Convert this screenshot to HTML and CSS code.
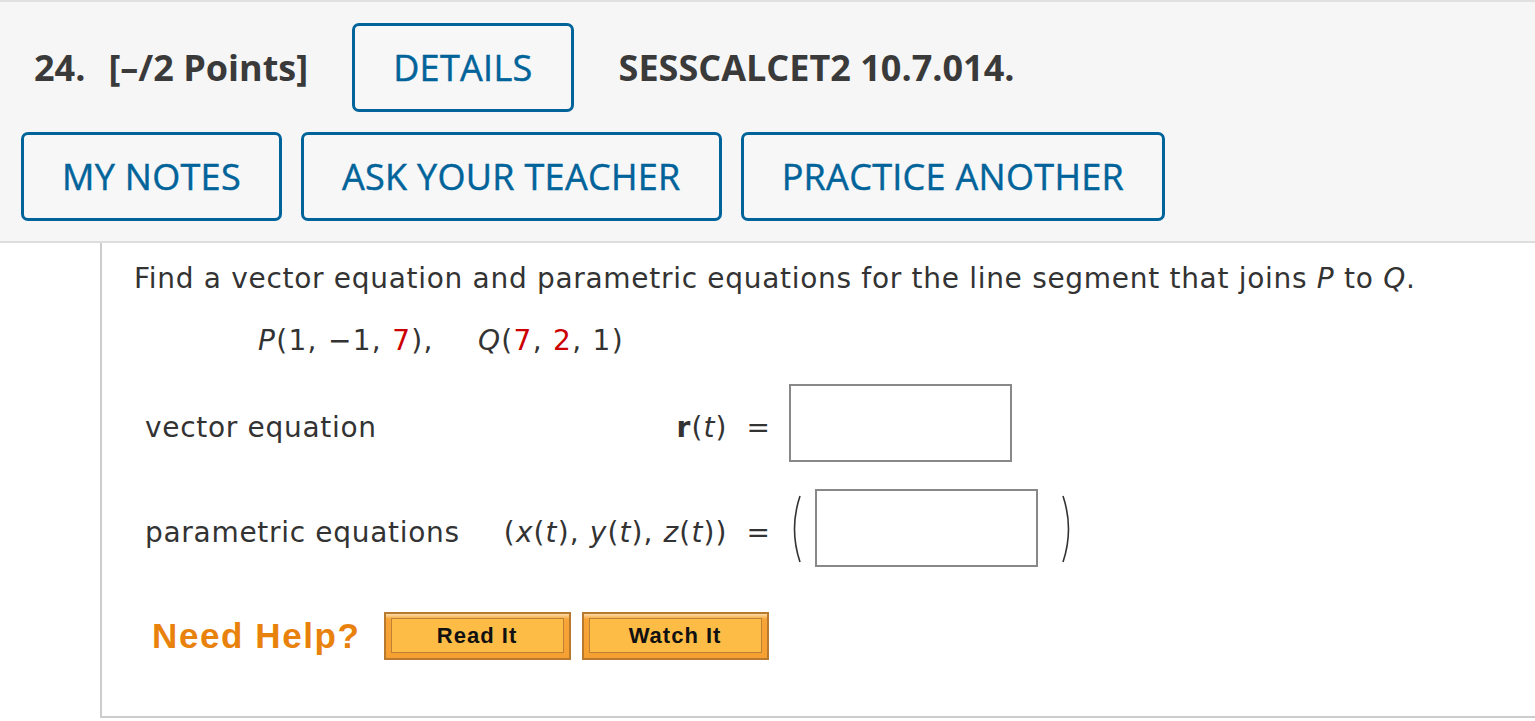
FILE: index.html
```html
<!DOCTYPE html>
<html lang="en">
<head>
    <meta charset="UTF-8">
    <title>Question 24</title>
    <link rel="stylesheet" href="styles.css">
</head>
<body>

<div id="header">
    <div class="row">
        <span class="qnum">24.</span>
        <span class="points">[&ndash;/2 Points]</span>
        <button type="button" class="action" id="details">DETAILS</button>
        <span class="code">SESSCALCET2 10.7.014.</span>
    </div>
    <div class="row buttons">
        <button type="button" class="action">MY NOTES</button>
        <button type="button" class="action">ASK YOUR TEACHER</button>
        <button type="button" class="action">PRACTICE ANOTHER</button>
    </div>
</div>

<div id="content">
    <p class="task">Find a vector equation and parametric equations for the line segment that joins <i>P</i> to <i>Q</i>.</p>

    <div class="points-line">
        <i>P</i>(1, &minus;1, <span class="red">7</span>), <span class="sep"></span><i>Q</i>(<span class="red">7</span>, <span class="red">2</span>, 1)
    </div>

    <div id="answers">
        <div class="label">vector equation</div>
        <div class="math"><b>r</b>(<i>t</i>)<span class="eq">=</span></div>
        <div class="field"><input type="text" class="box"></div>

        <div class="label">parametric equations</div>
        <div class="math">(<i>x</i>(<i>t</i>), <i>y</i>(<i>t</i>), <i>z</i>(<i>t</i>))<span class="eq">=</span></div>
        <div class="field">
            <svg class="paren" width="14" height="70" viewBox="0 0 14 70"><path d="M11 2 Q0 35 11 68" fill="none" stroke="#333" stroke-width="1.6"/></svg>
            <input type="text" class="box">
            <svg class="paren right" width="14" height="70" viewBox="0 0 14 70"><path d="M3 2 Q14 35 3 68" fill="none" stroke="#333" stroke-width="1.6"/></svg>
        </div>
    </div>

    <div id="help">
        <span class="need">Need Help?</span>
        <button type="button" class="help-btn"><span>Read It</span></button>
        <button type="button" class="help-btn"><span>Watch It</span></button>
    </div>
</div>

</body>
</html>
```

FILE: styles.css
```css
body {
    margin: 0;
    background-color: rgb(255, 255, 255);
    color: rgb(51, 51, 51);
}

#header {
    background-color: rgb(246, 246, 246);
    border-top: 2px solid rgb(224, 224, 224);
    border-bottom: 2px solid rgb(221, 221, 221);
    padding: 21px 0 20px 21px;
    font-family: "Open Sans", sans-serif;
}

.row {
    display: flex;
    align-items: center;
    gap: 19px;
}

.row.buttons {
    margin-top: 20px;
}

.qnum,
.points,
.code {
    font-size: 36px;
    font-weight: 700;
    color: rgb(58, 58, 58);
}

.qnum {
    margin-left: 13px;
    margin-right: 4px;
}

.code {
    margin-left: 26px;
}

.action {
    height: 89px;
    padding: 0 38px;
    border: 3px solid rgb(0, 99, 154);
    border-radius: 7px;
    background-color: rgb(247, 247, 247);
    font-family: "Open Sans", sans-serif;
    font-size: 36px;
    letter-spacing: 0.3px;
    -webkit-text-stroke: 0.45px currentColor;
    color: rgb(0, 99, 154);
}

#details {
    margin-left: 25px;
}

#content {
    margin-left: 100px;
    border-left: 2px solid rgb(204, 204, 204);
    border-bottom: 2px solid rgb(204, 204, 204);
    height: 473px;
    padding: 0 0 0 32px;
    font-family: "DejaVu Sans", Verdana, sans-serif;
    font-size: 28px;
    letter-spacing: 0.7px;
    color: rgb(51, 51, 51);
}

.task {
    margin: 0;
    padding-top: 16px;
    line-height: 40px;
}

.points-line {
    margin: 22px 0 0 124px;
    line-height: 40px;
    letter-spacing: 1.3px;
}

.sep {
    display: inline-block;
    width: 34px;
}

.red {
    color: rgb(204, 0, 0);
}

#answers {
    display: grid;
    grid-template-columns: 357px 268px auto;
    grid-auto-rows: 78px;
    row-gap: 27px;
    align-items: center;
    margin: 23px 0 0 11px;
}

.label,
.math {
    padding-top: 9px;
    white-space: nowrap;
}

.math {
    text-align: right;
    letter-spacing: 1.1px;
}

.eq {
    margin-left: 19px;
    letter-spacing: 0;
}

.field {
    display: flex;
    align-items: center;
    margin-left: 19px;
}

.box {
    width: 223px;
    height: 78px;
    box-sizing: border-box;
    border: 2px solid rgb(136, 136, 136);
    background-color: rgb(255, 255, 255);
}

.paren {
    margin: 2px 12px 0 0;
}

.paren.right {
    margin: 2px 0 0 22px;
}

#help {
    display: flex;
    align-items: center;
    margin: 45px 0 0 18px;
}

.need {
    font-family: "Liberation Sans", Arial, sans-serif;
    font-weight: 700;
    font-size: 35px;
    letter-spacing: 1.6px;
    color: rgb(232, 130, 12);
    margin-right: 23px;
}

.help-btn {
    width: 187px;
    height: 48px;
    margin-right: 11px;
    padding: 4px 5px 5px;
    border: 2px solid rgb(185, 122, 47);
    background: linear-gradient(rgb(252, 221, 170) 0, rgb(247, 164, 56) 5px, rgb(247, 160, 50) 100%);
}

.help-btn span {
    display: block;
    height: 100%;
    box-sizing: border-box;
    border: 1px solid rgb(190, 130, 55);
    background-color: rgb(253, 188, 70);
    font-family: "Liberation Sans", Arial, sans-serif;
    font-weight: 700;
    font-size: 22px;
    letter-spacing: 1px;
    line-height: 33px;
    color: rgb(17, 17, 17);
}
```
